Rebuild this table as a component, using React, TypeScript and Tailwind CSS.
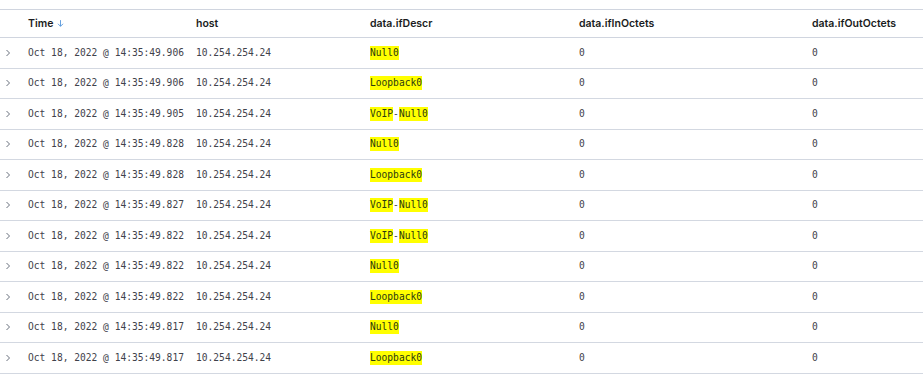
import React from 'react'

type Row = { time: string; host: string; descr: string[]; inOct: string; outOct: string }

const rows: Row[] = [
  { time: 'Oct 18, 2022 @ 14:35:49.906', host: '10.254.254.24', descr: ['Null0'], inOct: '0', outOct: '0' },
  { time: 'Oct 18, 2022 @ 14:35:49.906', host: '10.254.254.24', descr: ['Loopback0'], inOct: '0', outOct: '0' },
  { time: 'Oct 18, 2022 @ 14:35:49.905', host: '10.254.254.24', descr: ['VoIP', 'Null0'], inOct: '0', outOct: '0' },
  { time: 'Oct 18, 2022 @ 14:35:49.828', host: '10.254.254.24', descr: ['Null0'], inOct: '0', outOct: '0' },
  { time: 'Oct 18, 2022 @ 14:35:49.828', host: '10.254.254.24', descr: ['Loopback0'], inOct: '0', outOct: '0' },
  { time: 'Oct 18, 2022 @ 14:35:49.827', host: '10.254.254.24', descr: ['VoIP', 'Null0'], inOct: '0', outOct: '0' },
  { time: 'Oct 18, 2022 @ 14:35:49.822', host: '10.254.254.24', descr: ['VoIP', 'Null0'], inOct: '0', outOct: '0' },
  { time: 'Oct 18, 2022 @ 14:35:49.822', host: '10.254.254.24', descr: ['Null0'], inOct: '0', outOct: '0' },
  { time: 'Oct 18, 2022 @ 14:35:49.822', host: '10.254.254.24', descr: ['Loopback0'], inOct: '0', outOct: '0' },
  { time: 'Oct 18, 2022 @ 14:35:49.817', host: '10.254.254.24', descr: ['Null0'], inOct: '0', outOct: '0' },
  { time: 'Oct 18, 2022 @ 14:35:49.817', host: '10.254.254.24', descr: ['Loopback0'], inOct: '0', outOct: '0' },
]

const mono = "font-['DejaVu_Sans_Mono',monospace] text-[9.6px] text-[#3f424b]"

function Mark({ children }: { children: React.ReactNode }) {
  return <mark className="inline-block bg-[#ffff00] leading-[14px] text-[#2a3a10]">{children}</mark>
}

export default function App() {
  return (
    <div className="w-[923px] h-[375px] overflow-hidden bg-white pt-[9px] font-['Inter',sans-serif]">
      <div className="border-t-[1.5px] border-[#d0d5df]">
        {/* Header */}
        <div className="flex h-[28px] items-center border-b-[1.5px] border-[#d0d5df] text-[10.5px] font-semibold text-[#1a1c21]">
          <div className="w-[28px]" />
          <div className="flex w-[168px] items-center gap-[3px]">
            Time
            <svg width="9" height="9" viewBox="0 0 16 16" className="text-[#4a90d9]">
              <path d="M8 2v11M3.5 8.5 8 13l4.5-4.5" fill="none" stroke="currentColor" strokeWidth="1.5" />
            </svg>
          </div>
          <div className="w-[174px]">host</div>
          <div className="w-[209px]">data.ifDescr</div>
          <div className="w-[233px]">data.ifInOctets</div>
          <div>data.ifOutOctets</div>
        </div>

        {rows.map((r, i) => (
          <div key={i} className={`flex h-[30.5px] items-center border-b-[1.5px] border-[#d3d8e1] ${mono}`}>
            <div className="flex w-[28px] justify-center pl-[2px] pr-[14px]">
              <svg width="6" height="8" viewBox="0 0 6 8">
                <path d="M1.5 1 4.5 4 1.5 7" fill="none" stroke="#69707d" strokeWidth="1" />
              </svg>
            </div>
            <div className="w-[168px]">{r.time}</div>
            <div className="w-[174px]">{r.host}</div>
            <div className="w-[209px]">
              {r.descr.length === 2 ? (
                <>
                  <Mark>{r.descr[0]}</Mark>-<Mark>{r.descr[1]}</Mark>
                </>
              ) : (
                <Mark>{r.descr[0]}</Mark>
              )}
            </div>
            <div className="w-[233px]">{r.inOct}</div>
            <div>{r.outOct}</div>
          </div>
        ))}
      </div>
    </div>
  )
}
